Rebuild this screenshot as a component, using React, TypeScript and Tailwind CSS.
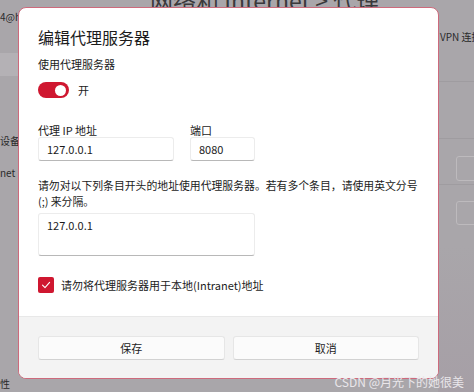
import React from 'react';

const font = { fontFamily: '"Noto Sans CJK SC", "Noto Sans", sans-serif' };

function Toggle() {
  return (
    <div className="flex items-center gap-[9px] h-[16px]">
      <div className="w-[31px] h-[16px] rounded-full bg-[#cf1730] flex items-center justify-end pr-[3px]">
        <div className="w-[11px] h-[11px] rounded-full bg-white" />
      </div>
      <span className="text-[11px] leading-[16px] text-[#1b1b1b]">开</span>
    </div>
  );
}

function Field({ label, value, width }: { label: string; value: string; width: string }) {
  return (
    <div className="flex flex-col">
      <span className="text-[11px] leading-[13px] text-[#1b1b1b]">{label}</span>
      <div className={`${width} h-[24px] bg-white border border-[#ececec] border-b-[#b8b8b8] rounded-[3px] flex items-center pl-[8px] text-[11px] text-[#1b1b1b]`}>
        {value}
      </div>
    </div>
  );
}

export default function App() {
  return (
    <div style={font} className="relative w-[474px] h-[392px] overflow-hidden bg-[#a9a6aa]">
      {/* page behind the dialog */}
      <div className="absolute left-[150px] top-[-14px] text-[23px] leading-[28px] text-[#3a393b] whitespace-nowrap">
        网络和 Internet &gt; 代理
      </div>
      <div className="absolute left-0 top-0 w-[40px] h-full flex flex-col text-[10px] text-[#2a2a2a] whitespace-nowrap">
        <div className="h-[53px] pt-[9px]">4@hotmail</div>
        <div className="h-[23px] bg-[#b4b1b5]" />
        <div className="mt-[57px]">设备</div>
        <div className="mt-[17px]">net</div>
        <div className="mt-auto mb-[1px]">性</div>
      </div>
      <div className="absolute right-0 top-0 w-[36px] h-full flex flex-col text-[10px] text-[#2a2a2a]">
        <div className="pt-[29px] pl-[2px] whitespace-nowrap">VPN 连接</div>
        <div className="mt-[37px] border-t border-[#9f9ca0] h-[57px]" />
        <div className="border-t border-[#9f9ca0] h-[46px] relative">
          <div className="absolute left-[18px] top-[17px] w-[30px] h-[25px] border border-[#bdbabd] rounded-[3px]" />
        </div>
        <div className="border-t border-[#9f9ca0] h-[60px] relative">
          <div className="absolute left-[18px] top-[16px] w-[30px] h-[24px] border border-[#bdbabd] rounded-[3px]" />
        </div>
        <div className="flex-1 bg-gradient-to-b from-[#a9a6aa] to-[#a69fa6]" />
      </div>

      {/* dialog */}
      <div className="absolute left-[18px] top-[7px] w-[421px] h-[372px] bg-white border border-[#cd6a7c] rounded-[8px] overflow-hidden flex flex-col">
        <div className="flex-1 pl-[19px] pr-[14px] pt-[19px] flex flex-col">
          <div className="text-[16px] leading-[20px] text-[#1b1b1b]">编辑代理服务器</div>
          <div className="mt-[10px] text-[11px] leading-[15px] text-[#1b1b1b]">使用代理服务器</div>
          <div className="mt-[10px]">
            <Toggle />
          </div>
          <div className="mt-[26px] flex gap-[16px]">
            <Field label="代理 IP 地址" value="127.0.0.1" width="w-[136px]" />
            <Field label="端口" value="8080" width="w-[65px]" />
          </div>
          <div className="mt-[16px] text-[10.85px] leading-[16px] text-[#1b1b1b] whitespace-nowrap">
            请勿对以下列条目开头的地址使用代理服务器。若有多个条目，请使用英文分号
            <br />
            (;) 来分隔。
          </div>
          <div className="mt-[4px] w-[217px] h-[43px] bg-white border border-[#ececec] border-b-[#b8b8b8] rounded-[3px] pl-[8px] pt-[3px] text-[11px] text-[#1b1b1b]">
            127.0.0.1
          </div>
          <div className="mt-[21px] flex items-center gap-[7px]">
            <div className="w-[16px] h-[16px] rounded-[2px] bg-[#cf1730] flex items-center justify-center">
              <svg width="10" height="10" viewBox="0 0 10 10" fill="none">
                <path d="M1.5 5.2 L4 7.6 L8.6 2.4" stroke="white" strokeWidth="1.1" strokeLinecap="round" strokeLinejoin="round" />
              </svg>
            </div>
            <span className="text-[11px] text-[#1b1b1b]">请勿将代理服务器用于本地(Intranet)地址</span>
          </div>
        </div>
        <div className="h-[62px] bg-[#f3f3f3] border-t border-[#e8e8e8] px-[19px] pt-[19px] flex gap-[8px]">
          <button className="flex-1 h-[24px] bg-[#fbfbfb] border border-[#e6e6e6] border-b-[#d2d2d2] rounded-[3px] text-[11px] text-[#1b1b1b]">
            保存
          </button>
          <button className="flex-1 h-[24px] bg-[#fbfbfb] border border-[#e6e6e6] border-b-[#d2d2d2] rounded-[3px] text-[11px] text-[#1b1b1b]">
            取消
          </button>
        </div>
      </div>

      <div className="absolute right-[10px] bottom-[1px] text-[12px] text-[#e9e6ea] whitespace-nowrap">
        CSDN @月光下的她很美
      </div>
    </div>
  );
}
